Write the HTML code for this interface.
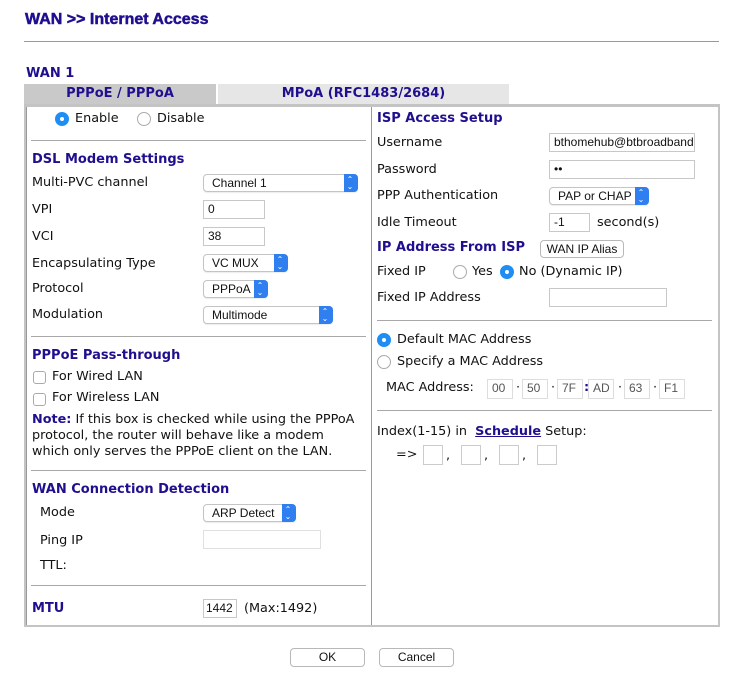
<!DOCTYPE html>
<html><head><meta charset="utf-8"><style>
*{margin:0;padding:0;box-sizing:border-box}
body{width:745px;height:687px;background:#fff;position:relative;font-family:"DejaVu Sans",Verdana,sans-serif;font-size:12.8px;color:#111;overflow:hidden}
.a{position:absolute;white-space:nowrap;line-height:16px}
.h{color:#1f0f8f;font-weight:bold;font-size:13px}
.inp{position:absolute;border:1px solid #c8c8c8;background:#fff;font-family:"Liberation Sans",Arial,sans-serif;font-size:12px;line-height:17px;padding-left:4px;color:#111;overflow:hidden;white-space:nowrap}
.sel{position:absolute;border:1px solid #c4c4c4;border-radius:4px;background:#fff;font-family:"Liberation Sans",Arial,sans-serif;font-size:12px;line-height:16px;padding-left:8px;color:#111;box-shadow:0 1px 1px rgba(0,0,0,.08)}
.sel:after{content:"";position:absolute;right:-1px;top:-1px;bottom:-1px;width:14px;background:#2f7ff0;border-radius:0 4px 4px 0}
.sel i{position:absolute;right:2px;top:1px;color:#fff;font-style:normal;font-size:8px;line-height:7px;z-index:2;width:10px;text-align:center}
.hr{position:absolute;height:1px;background:#a8a8a8}
.rad{position:absolute;width:14px;height:14px;border-radius:50%;border:1px solid #aaa;background:#fff}
.rad.on{background:#1e8ef5;border-color:#1e8ef5}
.rad.on:after{content:"";position:absolute;left:4px;top:4px;width:4px;height:4px;border-radius:50%;background:#fff}
.chk{position:absolute;width:13px;height:13px;border:1px solid #aaa;border-radius:3px;background:#fff}
.btn{position:absolute;border:1px solid #b8b8b8;border-radius:4px;background:#fff;font-family:"Liberation Sans",Arial,sans-serif;font-size:12px;text-align:center;line-height:16px;color:#111}
</style></head><body>
<div class="a" style="left:25px;top:10px;font-family:'Liberation Sans',Arial,sans-serif;font-weight:bold;font-size:16px;color:#1f0f8f;line-height:20px;-webkit-text-stroke:0.5px #1f0f8f">WAN &gt;&gt; Internet Access</div>
<div class="hr" style="left:24px;top:41px;width:695px;background:#999"></div>
<div class="a h" style="left:26px;top:66px">WAN 1</div>
<div style="position:absolute;left:24px;top:84px;width:192px;height:20px;background:#c9c9c9"></div>
<div class="a h" style="left:24px;top:86px;width:192px;text-align:center">PPPoE / PPPoA</div>
<div style="position:absolute;left:218px;top:84px;width:291px;height:20px;background:#e6e6e6"></div>
<div class="a h" style="left:218px;top:86px;width:291px;text-align:center">MPoA (RFC1483/2684)</div>
<div style="position:absolute;left:24px;top:104px;width:696px;height:523px;border:2px solid #c4c4c4;border-top:3px solid #c4c4c4"></div>
<div style="position:absolute;left:371px;top:107px;width:1px;height:518px;background:#999"></div>
<div style="position:absolute;left:26px;top:107px;width:1px;height:518px;background:#999"></div>

<!-- left -->
<div class="rad on" style="left:55px;top:112px"></div><div class="a" style="left:75px;top:111px">Enable</div>
<div class="rad" style="left:137px;top:112px"></div><div class="a" style="left:157px;top:111px">Disable</div>
<div class="hr" style="left:31px;top:140px;width:335px"></div>
<div class="a h" style="left:32px;top:152px">DSL Modem Settings</div>
<div class="a" style="left:32px;top:175px">Multi-PVC channel</div>
<div class="sel" style="left:203px;top:174px;width:155px;height:18px">Channel 1<i>⌃<br>⌄</i></div>
<div class="a" style="left:32px;top:202px">VPI</div>
<div class="inp" style="left:203px;top:200px;width:62px;height:19px">0</div>
<div class="a" style="left:32px;top:229px">VCI</div>
<div class="inp" style="left:203px;top:227px;width:62px;height:19px">38</div>
<div class="a" style="left:32px;top:256px">Encapsulating Type</div>
<div class="sel" style="left:203px;top:254px;width:85px;height:18px">VC MUX<i>⌃<br>⌄</i></div>
<div class="a" style="left:32px;top:281px">Protocol</div>
<div class="sel" style="left:203px;top:280px;width:65px;height:18px">PPPoA<i>⌃<br>⌄</i></div>
<div class="a" style="left:32px;top:307px">Modulation</div>
<div class="sel" style="left:203px;top:306px;width:130px;height:18px">Multimode<i>⌃<br>⌄</i></div>
<div class="hr" style="left:31px;top:336px;width:335px"></div>
<div class="a h" style="left:32px;top:348px">PPPoE Pass-through</div>
<div class="chk" style="left:33px;top:371px"></div><div class="a" style="left:52px;top:369px">For Wired LAN</div>
<div class="chk" style="left:33px;top:393px"></div><div class="a" style="left:52px;top:390px">For Wireless LAN</div>
<div class="a" style="left:32px;top:412px"><b style="color:#1f0f8f">Note:</b> If this box is checked while using the PPPoA</div>
<div class="a" style="left:32px;top:428px">protocol, the router will behave like a modem</div>
<div class="a" style="left:32px;top:444px">which only serves the PPPoE client on the LAN.</div>
<div class="hr" style="left:31px;top:470px;width:335px"></div>
<div class="a h" style="left:32px;top:482px">WAN Connection Detection</div>
<div class="a" style="left:40px;top:505px">Mode</div>
<div class="sel" style="left:203px;top:504px;width:93px;height:18px">ARP Detect<i>⌃<br>⌄</i></div>
<div class="a" style="left:40px;top:533px">Ping IP</div>
<div class="inp" style="left:203px;top:530px;width:118px;height:19px;border-color:#e0e0e0"></div>
<div class="a" style="left:40px;top:558px">TTL:</div>
<div class="hr" style="left:31px;top:585px;width:335px"></div>
<div class="a h" style="left:32px;top:601px">MTU</div>
<div class="inp" style="left:203px;top:599px;width:34px;height:19px;padding-left:2px">1442</div>
<div class="a" style="left:244px;top:601px">(Max:1492)</div>

<!-- right -->
<div class="a h" style="left:377px;top:111px">ISP Access Setup</div>
<div class="a" style="left:377px;top:135px">Username</div>
<div class="inp" style="left:549px;top:133px;width:146px;height:19px">bthomehub@btbroadband.</div>
<div class="a" style="left:377px;top:162px">Password</div>
<div class="inp" style="left:549px;top:160px;width:146px;height:19px">••</div>
<div class="a" style="left:377px;top:188px">PPP Authentication</div>
<div class="sel" style="left:549px;top:187px;width:100px;height:18px">PAP or CHAP<i>⌃<br>⌄</i></div>
<div class="a" style="left:377px;top:215px">Idle Timeout</div>
<div class="inp" style="left:549px;top:213px;width:41px;height:19px">-1</div>
<div class="a" style="left:597px;top:215px">second(s)</div>
<div class="a h" style="left:377px;top:240px">IP Address From ISP</div>
<div class="btn" style="left:540px;top:240px;width:84px;height:18px">WAN IP Alias</div>
<div class="a" style="left:377px;top:264px">Fixed IP</div>
<div class="rad" style="left:453px;top:265px"></div><div class="a" style="left:472px;top:264px">Yes</div>
<div class="rad on" style="left:500px;top:265px"></div><div class="a" style="left:519px;top:264px">No (Dynamic IP)</div>
<div class="a" style="left:377px;top:290px">Fixed IP Address</div>
<div class="inp" style="left:549px;top:288px;width:118px;height:19px"></div>
<div class="hr" style="left:377px;top:320px;width:335px"></div>
<div class="rad on" style="left:377px;top:333px"></div><div class="a" style="left:397px;top:332px">Default MAC Address</div>
<div class="rad" style="left:377px;top:355px"></div><div class="a" style="left:397px;top:354px">Specify a MAC Address</div>
<div class="a" style="left:386px;top:380px">MAC Address:</div>
<div class="inp" style="left:487px;top:379px;width:26px;height:20px;border-color:#ddd;color:#555">00</div>
<div class="a" style="left:516px;top:380px">·</div>
<div class="inp" style="left:522px;top:379px;width:26px;height:20px;border-color:#ddd;color:#555">50</div>
<div class="a" style="left:551px;top:380px">·</div>
<div class="inp" style="left:557px;top:379px;width:26px;height:20px;border-color:#ddd;color:#555">7F</div>
<div class="a" style="left:584px;top:380px;color:#1f0f8f;font-weight:bold">:</div>
<div class="inp" style="left:588px;top:379px;width:26px;height:20px;border-color:#ddd;color:#555">AD</div>
<div class="a" style="left:618px;top:380px">·</div>
<div class="inp" style="left:624px;top:379px;width:26px;height:20px;border-color:#ddd;color:#555">63</div>
<div class="a" style="left:653px;top:380px">·</div>
<div class="inp" style="left:659px;top:379px;width:26px;height:20px;border-color:#ddd;color:#555">F1</div>
<div class="hr" style="left:377px;top:410px;width:335px"></div>
<div class="a" style="left:377px;top:424px">Index(1-15) in&nbsp; <b style="color:#1f0f8f;text-decoration:underline">Schedule</b> Setup:</div>
<div class="a" style="left:396px;top:447px">=&gt;</div>
<div class="inp" style="left:423px;top:445px;width:20px;height:20px;border-color:#ccc"></div><div class="a" style="left:446px;top:448px">,</div>
<div class="inp" style="left:461px;top:445px;width:20px;height:20px;border-color:#ccc"></div><div class="a" style="left:484px;top:448px">,</div>
<div class="inp" style="left:499px;top:445px;width:20px;height:20px;border-color:#ccc"></div><div class="a" style="left:522px;top:448px">,</div>
<div class="inp" style="left:537px;top:445px;width:20px;height:20px;border-color:#ccc"></div>

<div class="btn" style="left:290px;top:648px;width:75px;height:19px">OK</div>
<div class="btn" style="left:379px;top:648px;width:75px;height:19px">Cancel</div>
</body></html>
